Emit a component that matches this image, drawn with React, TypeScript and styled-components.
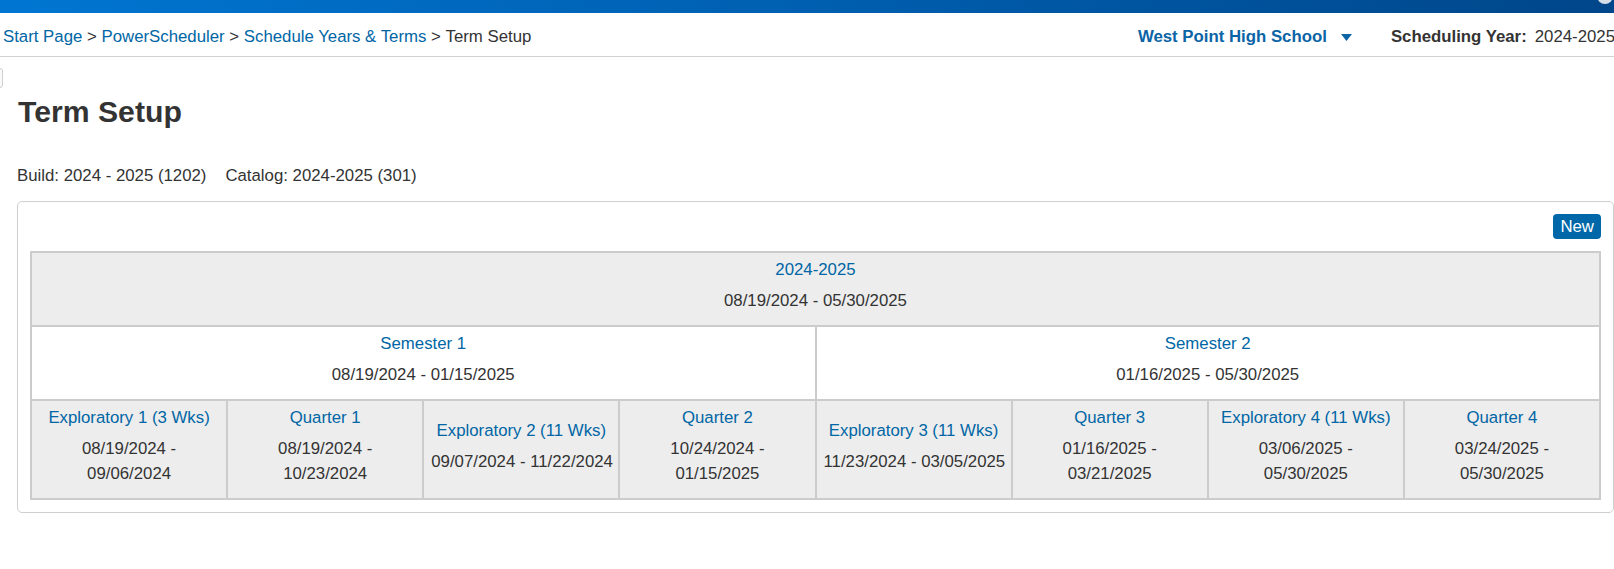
import React from 'react';
import styled, { createGlobalStyle } from 'styled-components';

interface Term {
  name: string;
  from: string;
  to: string;
  oneLine?: boolean;
}

const year: Term = { name: '2024-2025', from: '08/19/2024', to: '05/30/2025' };

const semesters: Term[] = [
  { name: 'Semester 1', from: '08/19/2024', to: '01/15/2025' },
  { name: 'Semester 2', from: '01/16/2025', to: '05/30/2025' },
];

const terms: Term[] = [
  { name: 'Exploratory 1 (3 Wks)', from: '08/19/2024', to: '09/06/2024' },
  { name: 'Quarter 1', from: '08/19/2024', to: '10/23/2024' },
  { name: 'Exploratory 2 (11 Wks)', from: '09/07/2024', to: '11/22/2024', oneLine: true },
  { name: 'Quarter 2', from: '10/24/2024', to: '01/15/2025' },
  { name: 'Exploratory 3 (11 Wks)', from: '11/23/2024', to: '03/05/2025', oneLine: true },
  { name: 'Quarter 3', from: '01/16/2025', to: '03/21/2025' },
  { name: 'Exploratory 4 (11 Wks)', from: '03/06/2025', to: '05/30/2025' },
  { name: 'Quarter 4', from: '03/24/2025', to: '05/30/2025' },
];

const GlobalStyle = createGlobalStyle`
  html, body {
    margin: 0;
    padding: 0;
    overflow-x: hidden;
    background: #fff;
  }
  body {
    font-family: "Liberation Sans", Arial, Helvetica, sans-serif;
    font-size: 16.8px;
    color: #333;
  }
`;

const TopBar = styled.div`
  position: relative;
  height: 13px;
  overflow: hidden;
  background: linear-gradient(to right, #0076d2 0%, #005fb0 50%, #00468a 100%);
`;

const UserBadge = styled.span`
  position: absolute;
  right: 1px;
  top: -12px;
  width: 16px;
  height: 16px;
  border-radius: 50%;
  background: #d6dee8;
`;

const Header = styled.header`
  display: flex;
  justify-content: space-between;
  align-items: center;
  padding: 14px 0 9px 3px;
  line-height: 20px;
  border-bottom: 1px solid #d2d2d2;
  white-space: nowrap;
`;

const Crumbs = styled.nav`
  display: flex;
  align-items: center;
`;

const CrumbLink = styled.a`
  color: #0066a5;
  text-decoration: none;
`;

const CrumbSep = styled.span`
  color: #333;
  padding: 0 4.7px;
`;

const HeaderRight = styled.div`
  display: flex;
  align-items: center;
`;

const SchoolPicker = styled.a`
  display: flex;
  align-items: center;
  gap: 14px;
  font-weight: bold;
  color: #0a64a6;
  text-decoration: none;
`;

const YearLabel = styled.span`
  font-weight: bold;
  margin-left: 39px;
`;

const YearValue = styled.span`
  margin-left: 8px;
  margin-right: -1px;
`;

const Content = styled.main`
  padding: 0 0 0 17px;
`;

const SideTab = styled.div`
  box-sizing: border-box;
  width: 12px;
  height: 20px;
  margin: 11px 0 0 -26px;
  border: 1px solid #cfcfcf;
  border-radius: 3px;
  background: #fafafa;
`;

const Title = styled.h1`
  margin: 7px 0 0 1px;
  font-size: 30.2px;
  line-height: 34px;
  font-weight: bold;
  color: #333;
`;

const Info = styled.div`
  margin-top: 35px;
  line-height: 24px;
`;

const InfoItem = styled.span<{ $gap?: boolean }>`
  margin-left: ${(p) => (p.$gap ? '19px' : '0')};
`;

const Card = styled.section`
  margin-top: 13px;
  border: 1px solid #cfcfcf;
  border-radius: 5px;
  padding: 12px;
`;

const Toolbar = styled.div`
  display: flex;
  justify-content: flex-end;
  margin-bottom: 12px;
`;

const NewButton = styled.button`
  height: 25px;
  padding: 0 7px;
  border: none;
  border-radius: 4px;
  background: #0068a8;
  color: #fff;
  font-family: inherit;
  font-size: 16.8px;
  line-height: 25px;
  cursor: pointer;
`;

const TermTable = styled.table`
  width: 100%;
  table-layout: fixed;
  border-collapse: separate;
  border-spacing: 0;
  border: 1px solid #cccccc;
`;

const Cell = styled.td<{ $shaded?: boolean }>`
  border: 1px solid #cccccc;
  padding: 5px 7px 12px;
  text-align: center;
  vertical-align: middle;
  background: ${(p) => (p.$shaded ? '#ededed' : '#fff')};
`;

const TermName = styled.a`
  display: block;
  line-height: 24px;
  color: #0066a5;
  text-decoration: none;
`;

const Dates = styled.div<{ $oneLine?: boolean }>`
  margin-top: 6px;
  line-height: 25px;
  white-space: ${(p) => (p.$oneLine ? 'nowrap' : 'normal')};
`;

function Caret() {
  return (
    <svg width="11" height="7" viewBox="0 0 11 7" aria-hidden="true">
      <polygon points="0,0 11,0 5.5,7" fill="#0a64a6" />
    </svg>
  );
}

function TermCell({ term, span, shaded }: { term: Term; span?: number; shaded?: boolean }) {
  return (
    <Cell colSpan={span} $shaded={shaded}>
      <TermName href="#">{term.name}</TermName>
      <Dates $oneLine={term.oneLine}>
        {term.from} - {term.to}
      </Dates>
    </Cell>
  );
}

export default function App() {
  return (
    <>
      <GlobalStyle />
      <TopBar>
        <UserBadge />
      </TopBar>
      <Header>
        <Crumbs>
          <CrumbLink href="#">Start Page</CrumbLink>
          <CrumbSep>&gt;</CrumbSep>
          <CrumbLink href="#">PowerScheduler</CrumbLink>
          <CrumbSep>&gt;</CrumbSep>
          <CrumbLink href="#">Schedule Years &amp; Terms</CrumbLink>
          <CrumbSep>&gt;</CrumbSep>
          <span>Term Setup</span>
        </Crumbs>
        <HeaderRight>
          <SchoolPicker href="#">
            West Point High School
            <Caret />
          </SchoolPicker>
          <YearLabel>Scheduling Year:</YearLabel>
          <YearValue>2024-2025</YearValue>
        </HeaderRight>
      </Header>
      <Content>
        <SideTab />
        <Title>Term Setup</Title>
        <Info>
          <InfoItem>Build: 2024 - 2025 (1202)</InfoItem>
          <InfoItem $gap>Catalog: 2024-2025 (301)</InfoItem>
        </Info>
        <Card>
          <Toolbar>
            <NewButton type="button">New</NewButton>
          </Toolbar>
          <TermTable>
            <tbody>
              <tr>
                <TermCell term={year} span={8} shaded />
              </tr>
              <tr>
                {semesters.map((s) => (
                  <TermCell key={s.name} term={s} span={4} />
                ))}
              </tr>
              <tr>
                {terms.map((t) => (
                  <TermCell key={t.name} term={t} shaded />
                ))}
              </tr>
            </tbody>
          </TermTable>
        </Card>
      </Content>
    </>
  );
}
